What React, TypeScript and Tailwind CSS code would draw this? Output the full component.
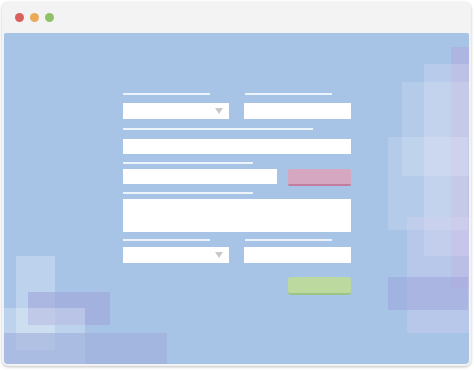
import React from "react";

function Line({ w }: { w: string }) {
  return <div className={`h-[2px] bg-white/80 ${w}`} />;
}

function Select() {
  return (
    <div className="relative h-[16px] bg-white">
      <div className="absolute right-[6px] top-[5px] h-0 w-0 border-l-[4px] border-r-[4px] border-t-[6px] border-l-transparent border-r-transparent border-t-[#c9c9c9]" />
    </div>
  );
}

export default function App() {
  return (
    <div className="h-[371px] w-[474px] bg-white p-[2px] pr-[3px]">
      <div className="flex h-[364px] flex-col rounded-[6px] bg-[#f3f3f3] px-[2px] pb-[2px] shadow-[0_1px_3px_rgba(0,0,0,0.25)]">
        <div className="flex h-[31px] shrink-0 items-center gap-[6px] pl-[11px]">
          <div className="h-[9px] w-[9px] rounded-full bg-[#d9615c]" />
          <div className="h-[9px] w-[9px] rounded-full bg-[#e9ab58]" />
          <div className="h-[9px] w-[9px] rounded-full bg-[#8fc169]" />
        </div>
        <div className="relative flex-1 overflow-hidden rounded-b-[4px] rounded-t-[2px] bg-[#a7c4e7]">
          {/* decorative rectangles */}
          <div className="absolute left-[447px] top-[14px] h-[242px] w-[20px] bg-[#b1abdc]/55" />
          <div className="absolute left-[420px] top-[31px] h-[192px] w-[50px] bg-[#e6dcf2]/30" />
          <div className="absolute left-[398px] top-[49px] h-[94px] w-[70px] bg-white/15" />
          <div className="absolute left-[384px] top-[104px] h-[93px] w-[80px] bg-white/15" />
          <div className="absolute left-[403px] top-[184px] h-[116px] w-[70px] bg-[#d6d2f0]/35" />
          <div className="absolute left-[384px] top-[244px] h-[33px] w-[80px] bg-[#9c9fd6]/45" />
          <div className="absolute left-[12px] top-[223px] h-[94px] w-[39px] bg-white/25" />
          <div className="absolute left-[24px] top-[259px] h-[33px] w-[82px] bg-[#9ea5d8]/60" />
          <div className="absolute left-[0px] top-[275px] h-[60px] w-[81px] bg-white/25" />
          <div className="absolute left-[0px] top-[300px] h-[40px] w-[163px] bg-[#9eaedc]/60" />

          <div className="relative mx-auto mt-[60px] flex w-[228px] flex-col">
            <div className="flex gap-[15px]">
              <div className="flex w-[106px] flex-col">
                <Line w="w-[87px]" />
                <div className="mt-[8px]">
                  <Select />
                </div>
              </div>
              <div className="flex flex-1 flex-col">
                <div className="ml-[1px]">
                  <Line w="w-[87px]" />
                </div>
                <div className="mt-[8px] h-[16px] bg-white" />
              </div>
            </div>

            <div className="mt-[9px]">
              <Line w="w-[190px]" />
            </div>
            <div className="mt-[9px] h-[15px] bg-white" />

            <div className="mt-[8px]">
              <Line w="w-[130px]" />
            </div>
            <div className="mt-[5px] flex items-start justify-between">
              <div className="h-[15px] w-[154px] bg-white" />
              <div className="h-[17px] w-[63px] rounded-[2px] border-b-[2px] border-[#c27c9f] bg-[#d5a7c0]" />
            </div>

            <div className="mt-[6px]">
              <Line w="w-[130px]" />
            </div>
            <div className="mt-[5px] h-[33px] bg-white" />

            <div className="mt-[7px] flex gap-[15px]">
              <div className="flex w-[106px] flex-col">
                <Line w="w-[87px]" />
                <div className="mt-[6px]">
                  <Select />
                </div>
              </div>
              <div className="flex flex-1 flex-col">
                <div className="ml-[1px]">
                  <Line w="w-[87px]" />
                </div>
                <div className="mt-[6px] h-[16px] bg-white" />
              </div>
            </div>

            <div className="mt-[14px] flex justify-end">
              <div className="h-[18px] w-[63px] rounded-[3px] border-b-[2px] border-[#9cc585] bg-[#bcda9f]" />
            </div>
          </div>
        </div>
      </div>
    </div>
  );
}
